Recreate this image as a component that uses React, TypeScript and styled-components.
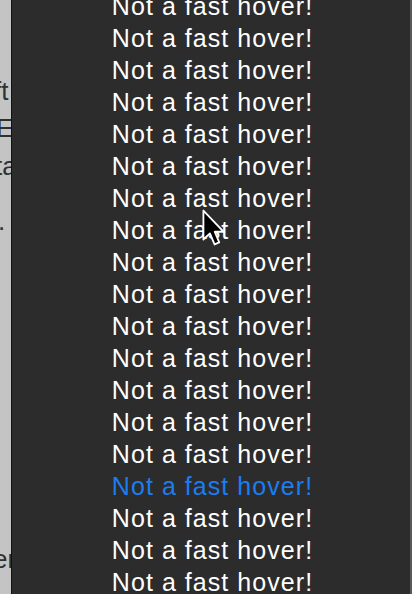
import React from 'react';
import styled, { createGlobalStyle } from 'styled-components';

const Global = createGlobalStyle`
  html, body {
    margin: 0;
    padding: 0;
    height: 100%;
    overflow: hidden;
  }
  body {
    background: #bcbcbc;
    font-family: "Liberation Sans", Arial, sans-serif;
  }
`;

const Page = styled.div`
  position: relative;
  width: 412px;
  height: 594px;
  overflow: hidden;
  background: linear-gradient(to right, #c4c4c4, #b6b6b6);
`;

const Backdrop = styled.div`
  display: flex;
  flex-direction: column;
  padding-top: 76px;
  color: #303030;
  font-size: 26px;
`;

const BackLine = styled.div<{ $indent: number; $gap: number }>`
  height: 30px;
  line-height: 30px;
  margin-bottom: ${(p) => p.$gap}px;
  text-indent: ${(p) => p.$indent}px;
  white-space: nowrap;
`;

const Menu = styled.div`
  position: absolute;
  top: 0;
  bottom: 0;
  left: 11px;
  right: 0;
  background: #2c2c2c;
  border-left: 1px solid #111;
  border-right: 2px solid #5a5a5c;
  overflow: hidden;
`;

const List = styled.ul`
  list-style: none;
  margin: -10px 0 0;
  padding: 0 0 0 3px;
  display: flex;
  flex-direction: column;
  align-items: center;
`;

const Item = styled.li<{ $active?: boolean }>`
  height: 32px;
  line-height: 32px;
  font-size: 25px;
  letter-spacing: 1.05px;
  color: ${(p) => (p.$active ? '#1b7df1' : '#ffffff')};
  white-space: nowrap;
`;

const Cursor = styled.svg`
  position: absolute;
  left: 202px;
  top: 209px;
  width: 24px;
  height: 37px;
`;

const rows = Array.from({ length: 19 }, (_, i) => i);

export default function App() {
  return (
    <Page>
      <Global />
      <Backdrop>
        <BackLine $indent={-6} $gap={7}>ft</BackLine>
        <BackLine $indent={-4} $gap={8}>E</BackLine>
        <BackLine $indent={-5} $gap={25}>ta</BackLine>
        <BackLine $indent={-2} $gap={308}>.</BackLine>
        <BackLine $indent={-7} $gap={0}>er</BackLine>
      </Backdrop>
      <Menu>
        <List>
          {rows.map((i) => (
            <Item key={i} $active={i === 15}>
              Not a fast hover!
            </Item>
          ))}
        </List>
      </Menu>
      <Cursor viewBox="0 0 17 26">
        <path
          d="M1 1 L1 21.5 L5.6 17.2 L8.9 25 L12.2 23.6 L9 16 L15.2 16 Z"
          fill="#000"
          stroke="#fff"
          strokeWidth="1.3"
          strokeLinejoin="round"
        />
      </Cursor>
    </Page>
  );
}
